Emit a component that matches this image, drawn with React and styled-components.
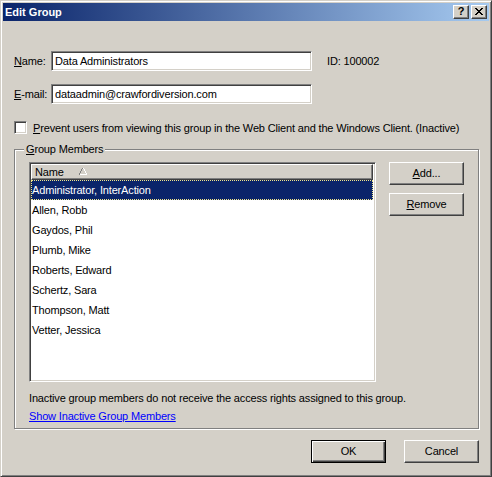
import React from 'react';
import styled, { createGlobalStyle } from 'styled-components';

const members = [
  'Administrator, InterAction',
  'Allen, Robb',
  'Gaydos, Phil',
  'Plumb, Mike',
  'Roberts, Edward',
  'Schertz, Sara',
  'Thompson, Matt',
  'Vetter, Jessica',
];

const GlobalStyle = createGlobalStyle`
  html, body {
    margin: 0;
    padding: 0;
    background: #d4d0c8;
  }
  body {
    font-family: "Liberation Sans", Arial, sans-serif;
    font-size: 11px;
    letter-spacing: -0.16px;
    color: #000;
  }
  * { box-sizing: border-box; }
`;

export default function App() {
  return (
    <>
      <GlobalStyle />
      <Window>
        <TitleBar>
          <Title>Edit Group</Title>
          <Caps>
            <CapButton>?</CapButton>
            <CapButton>
              <svg width="8" height="7" viewBox="0 0 8 7" shapeRendering="crispEdges">
                <path d="M0 0h2v1h-2zM6 0h2v1h-2zM1 1h2v1h-2zM5 1h2v1h-2zM2 2h4v1h-4zM3 3h2v1h-2zM2 4h4v1h-4zM1 5h2v1h-2zM5 5h2v1h-2zM0 6h2v1h-2zM6 6h2v1h-2z" fill="#000" />
              </svg>
            </CapButton>
          </Caps>
        </TitleBar>

        <Body>
          <FieldGrid>
            <FieldLabel><u>N</u>ame:</FieldLabel>
            <TextBox defaultValue="Data Administrators" readOnly />
            <IdText>ID: 100002</IdText>
            <FieldLabel><u>E</u>-mail:</FieldLabel>
            <TextBox defaultValue="dataadmin@crawfordiversion.com" readOnly />
            <span />
          </FieldGrid>

          <CheckRow>
            <CheckBox />
            <span><u>P</u>revent users from viewing this group in the Web Client and the Windows Client. (Inactive)</span>
          </CheckRow>

          <GroupBox>
            <GroupTitle><u>G</u>roup Members</GroupTitle>
            <GroupTop>
              <ListView>
                <ListHeader>
                  <span>Name</span>
                  <svg width="8" height="7" viewBox="0 0 8 7" shapeRendering="crispEdges">
                    <path d="M3 0h1v1h-1zM2 1h1v2h-1zM1 3h1v2h-1zM0 5h1v2h-1z" fill="#808080" />
                    <path d="M4 0h1v1h-1zM5 1h1v2h-1zM6 3h1v2h-1zM7 5h1v2h-1zM1 6h6v1h-6z" fill="#fff" />
                  </svg>
                </ListHeader>
                {members.map((name, i) => (
                  <ListRow key={name} $selected={i === 0}>{name}</ListRow>
                ))}
              </ListView>
              <SideButtons>
                <Button><u>A</u>dd...</Button>
                <Button><u>R</u>emove</Button>
              </SideButtons>
            </GroupTop>
            <Note>Inactive group members do not receive the access rights assigned to this group.</Note>
            <LinkText href="#">Show Inactive Group Members</LinkText>
          </GroupBox>

          <Footer>
            <Button $default>OK</Button>
            <Button>Cancel</Button>
          </Footer>
        </Body>
      </Window>
    </>
  );
}

const Window = styled.div`
  width: 492px;
  height: 477px;
  background: #d4d0c8;
  border: 1px solid;
  border-color: #d4d0c8 #404040 #404040 #d4d0c8;
  box-shadow: inset 1px 1px #fff, inset -1px -1px #808080;
  padding: 2px;
  display: flex;
  flex-direction: column;
`;

const TitleBar = styled.div`
  height: 18px;
  display: flex;
  align-items: center;
  justify-content: space-between;
  padding: 0 2px 0 2px;
  background: linear-gradient(to right, #0a246a, #a6caf0);
`;

const Title = styled.div`
  color: #fff;
  font-weight: bold;
  font-size: 11px;
  letter-spacing: 0;
`;

const Caps = styled.div`
  display: flex;
  gap: 2px;
`;

const CapButton = styled.div`
  width: 16px;
  height: 14px;
  display: flex;
  align-items: center;
  justify-content: center;
  background: #d4d0c8;
  border: 1px solid;
  border-color: #fff #404040 #404040 #fff;
  box-shadow: inset -1px -1px #808080;
  font-weight: bold;
  font-size: 11px;
  line-height: 1;
  padding-bottom: 1px;
`;

const Body = styled.div`
  flex: 1;
  display: flex;
  flex-direction: column;
  padding: 30px 10px 0 11px;
`;

const FieldGrid = styled.div`
  display: grid;
  grid-template-columns: 37px 261px auto;
  row-gap: 13px;
  align-items: center;
`;

const FieldLabel = styled.label`
  line-height: 13px;
`;

const TextBox = styled.input`
  height: 20px;
  width: 261px;
  border: 1px solid;
  border-color: #808080 #fff #fff #808080;
  box-shadow: inset 1px 1px #404040, inset -1px -1px #d4d0c8;
  background: #fff;
  font: inherit;
  letter-spacing: inherit;
  padding: 0 3px 1px;
  outline: none;
`;

const IdText = styled.span`
  padding-left: 15px;
`;

const CheckRow = styled.label`
  display: flex;
  align-items: center;
  gap: 6px;
  margin-top: 17px;
  height: 13px;
`;

const CheckBox = styled.span`
  width: 13px;
  height: 13px;
  flex: none;
  background: #fff;
  border: 1px solid;
  border-color: #808080 #fff #fff #808080;
  box-shadow: inset 1px 1px #404040, inset -1px -1px #d4d0c8;
`;

const GroupBox = styled.div`
  position: relative;
  margin-top: 15px;
  width: 465px;
  height: 280px;
  border: 1px solid #808080;
  box-shadow: inset 1px 1px #fff, 1px 1px #fff;
  padding: 12px 14px 0 14px;
`;

const GroupTitle = styled.span`
  position: absolute;
  top: -7px;
  left: 9px;
  padding: 0 2px;
  background: #d4d0c8;
  line-height: 13px;
`;

const GroupTop = styled.div`
  display: flex;
  gap: 13px;
`;

const ListView = styled.div`
  width: 347px;
  height: 220px;
  background: #fff;
  border: 1px solid;
  border-color: #808080 #fff #fff #808080;
  box-shadow: inset 1px 1px #404040, inset -1px -1px #d4d0c8;
  padding: 1px 2px 2px 1px;
`;

const ListHeader = styled.div`
  height: 16px;
  display: flex;
  align-items: center;
  gap: 15px;
  padding: 0 0 0 3px;
  background: #d4d0c8;
  border: 1px solid;
  border-color: #fff #404040 #404040 #fff;
  box-shadow: inset -1px -1px #808080;

  svg { margin-top: -1px; }
`;

const ListRow = styled.div`
  height: 20px;
  display: flex;
  align-items: center;
  padding-left: 1px;
  background: ${(p) => (p.$selected ? '#0a246a' : 'transparent')};
  color: ${(p) => (p.$selected ? '#fff' : '#000')};
  outline: ${(p) => (p.$selected ? '1px dotted #f0e68c' : 'none')};
  outline-offset: -1px;
`;

const SideButtons = styled.div`
  display: flex;
  flex-direction: column;
  gap: 8px;
`;

const Button = styled.button`
  width: 75px;
  height: 23px;
  font: inherit;
  letter-spacing: inherit;
  color: #000;
  background: #d4d0c8;
  padding: 0 0 1px;
  border: 1px solid;
  border-color: ${(p) => (p.$default ? '#000' : '#fff #404040 #404040 #fff')};
  box-shadow: ${(p) =>
    p.$default
      ? 'inset 1px 1px #fff, inset -1px -1px #404040, inset -2px -2px #808080'
      : 'inset -1px -1px #808080'};
`;

const Note = styled.div`
  margin-top: 10px;
  line-height: 13px;
`;

const LinkText = styled.a`
  display: inline-block;
  margin-top: 5px;
  line-height: 13px;
  color: #0000ff;
  text-decoration: underline;
`;

const Footer = styled.div`
  display: flex;
  justify-content: flex-end;
  gap: 18px;
  margin-top: 11px;
`;
